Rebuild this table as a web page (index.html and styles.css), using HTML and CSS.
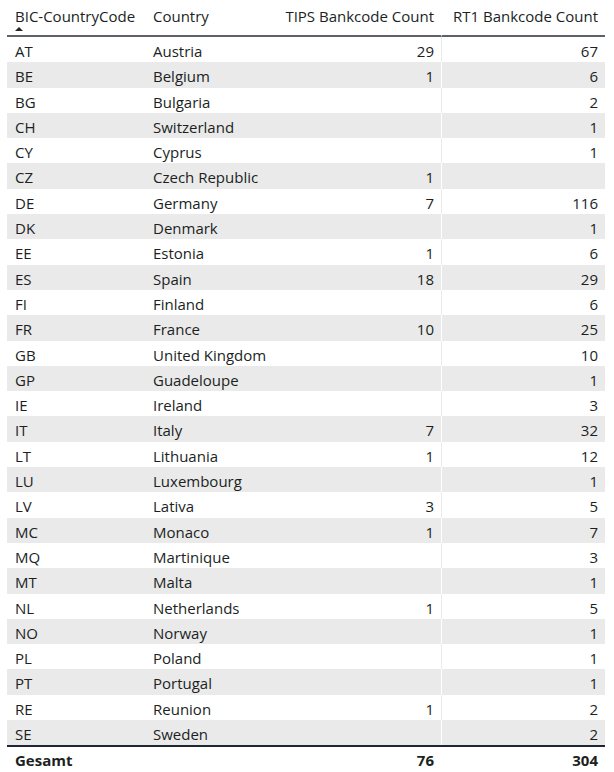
FILE: index.html
```html
<!DOCTYPE html>
<html>
<head>
<meta charset="utf-8">
<link rel="stylesheet" href="styles.css">
</head>
<body>
<div class="visual">
<table class="grid">
<colgroup>
<col class="c1"><col class="c2"><col class="c3"><col class="c4">
</colgroup>
<thead>
<tr>
<th class="sorted"><span class="hlabel">BIC-CountryCode</span><span class="arrow"></span></th>
<th>Country</th>
<th class="num">TIPS Bankcode Count</th>
<th class="num sep">RT1 Bankcode Count</th>
</tr>
</thead>
<tbody>
<tr><td>AT</td><td>Austria</td><td class="num">29</td><td class="num sep">67</td></tr>
<tr><td>BE</td><td>Belgium</td><td class="num">1</td><td class="num sep">6</td></tr>
<tr><td>BG</td><td>Bulgaria</td><td class="num"></td><td class="num sep">2</td></tr>
<tr><td>CH</td><td>Switzerland</td><td class="num"></td><td class="num sep">1</td></tr>
<tr><td>CY</td><td>Cyprus</td><td class="num"></td><td class="num sep">1</td></tr>
<tr><td>CZ</td><td>Czech Republic</td><td class="num">1</td><td class="num sep"></td></tr>
<tr><td>DE</td><td>Germany</td><td class="num">7</td><td class="num sep">116</td></tr>
<tr><td>DK</td><td>Denmark</td><td class="num"></td><td class="num sep">1</td></tr>
<tr><td>EE</td><td>Estonia</td><td class="num">1</td><td class="num sep">6</td></tr>
<tr><td>ES</td><td>Spain</td><td class="num">18</td><td class="num sep">29</td></tr>
<tr><td>FI</td><td>Finland</td><td class="num"></td><td class="num sep">6</td></tr>
<tr><td>FR</td><td>France</td><td class="num">10</td><td class="num sep">25</td></tr>
<tr><td>GB</td><td>United Kingdom</td><td class="num"></td><td class="num sep">10</td></tr>
<tr><td>GP</td><td>Guadeloupe</td><td class="num"></td><td class="num sep">1</td></tr>
<tr><td>IE</td><td>Ireland</td><td class="num"></td><td class="num sep">3</td></tr>
<tr><td>IT</td><td>Italy</td><td class="num">7</td><td class="num sep">32</td></tr>
<tr><td>LT</td><td>Lithuania</td><td class="num">1</td><td class="num sep">12</td></tr>
<tr><td>LU</td><td>Luxembourg</td><td class="num"></td><td class="num sep">1</td></tr>
<tr><td>LV</td><td>Lativa</td><td class="num">3</td><td class="num sep">5</td></tr>
<tr><td>MC</td><td>Monaco</td><td class="num">1</td><td class="num sep">7</td></tr>
<tr><td>MQ</td><td>Martinique</td><td class="num"></td><td class="num sep">3</td></tr>
<tr><td>MT</td><td>Malta</td><td class="num"></td><td class="num sep">1</td></tr>
<tr><td>NL</td><td>Netherlands</td><td class="num">1</td><td class="num sep">5</td></tr>
<tr><td>NO</td><td>Norway</td><td class="num"></td><td class="num sep">1</td></tr>
<tr><td>PL</td><td>Poland</td><td class="num"></td><td class="num sep">1</td></tr>
<tr><td>PT</td><td>Portugal</td><td class="num"></td><td class="num sep">1</td></tr>
<tr><td>RE</td><td>Reunion</td><td class="num">1</td><td class="num sep">2</td></tr>
<tr><td>SE</td><td>Sweden</td><td class="num"></td><td class="num sep">2</td></tr>
</tbody>
<tfoot>
<tr><td>Gesamt</td><td></td><td class="num">76</td><td class="num">304</td></tr>
</tfoot>
</table>
</div>
</body>
</html>
```

FILE: styles.css
```css
html, body {
  margin: 0;
  padding: 0;
  background: #ffffff;
}

.visual {
  padding-left: 7px;
  width: 598px;
  font-family: "Open Sans", "Noto Sans", sans-serif;
  font-size: 15px;
  color: #201f1e;
}

.grid {
  border-collapse: separate;
  border-spacing: 0;
  table-layout: fixed;
  width: 598px;
}

.c1 { width: 138px; }
.c2 { width: 132px; }
.c3 { width: 164px; }
.c4 { width: 164px; }

.grid th,
.grid td {
  padding: 0 8px;
  white-space: nowrap;
  overflow: hidden;
  text-align: left;
  box-sizing: border-box;
}

.grid th {
  font-weight: normal;
  height: 37px;
  vertical-align: top;
  padding-top: 5px;
  border-bottom: 2px solid #5e6169;
  line-height: 22px;
}

.grid th.sorted {
  position: relative;
}

.arrow {
  position: absolute;
  left: 8px;
  top: 27px;
  width: 0;
  height: 0;
  border-left: 4px solid transparent;
  border-right: 4px solid transparent;
  border-bottom: 4px solid #252423;
}

.grid tbody td {
  height: 25.3px;
  vertical-align: top;
  line-height: 20px;
  padding-top: 4px;
  padding-bottom: 0;
}

.grid tbody tr:nth-child(even) td {
  background: #eaeaea;
}

.grid .num {
  text-align: right;
  padding-right: 7px;
}

.grid .sep {
  border-left: 1px solid #ebebeb;
}

.grid th.sep {
  border-left: 1px solid #ffffff;
}

.grid tbody tr:nth-child(even) td.sep {
  border-left-color: #ffffff;
}

.grid tfoot td {
  border-top: 2px solid #1e2533;
  height: 27px;
  vertical-align: top;
  font-weight: bold;
  line-height: 20px;
  padding-top: 3px;
}
```
